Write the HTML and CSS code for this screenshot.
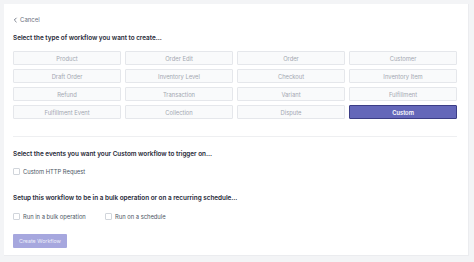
FILE: index.html
```html
<!DOCTYPE html>
<html>
<head>
<meta charset="utf-8">
<link rel="stylesheet" href="styles.css">
</head>
<body>
<div class="card">
  <div class="cancel"><svg class="chev" width="5" height="6" viewBox="0 0 5 6"><path d="M3.5 0.8 L1.3 3 L3.5 5.2" fill="none" stroke="#6b7280" stroke-width="0.9"/></svg>Cancel</div>
  <h2 class="heading first">Select the type of workflow you want to create...</h2>
  <div class="grid">
    <div class="opt">Product</div>
    <div class="opt">Order Edit</div>
    <div class="opt">Order</div>
    <div class="opt">Customer</div>
    <div class="opt">Draft Order</div>
    <div class="opt">Inventory Level</div>
    <div class="opt">Checkout</div>
    <div class="opt">Inventory Item</div>
    <div class="opt">Refund</div>
    <div class="opt">Transaction</div>
    <div class="opt">Variant</div>
    <div class="opt">Fulfillment</div>
    <div class="opt">Fulfillment Event</div>
    <div class="opt">Collection</div>
    <div class="opt">Dispute</div>
    <div class="opt active">Custom</div>
  </div>
  <div class="divider"></div>
  <h2 class="heading">Select the events you want your Custom workflow to trigger on...</h2>
  <div class="checks events">
    <label class="check"><span class="box"></span>Custom HTTP Request</label>
  </div>
  <h2 class="heading">Setup this workflow to be in a bulk operation or on a recurring schedule...</h2>
  <div class="checks schedule">
    <label class="check wide"><span class="box"></span>Run in a bulk operation</label>
    <label class="check"><span class="box"></span>Run on a schedule</label>
  </div>
  <button class="create">Create Workflow</button>
</div>
</body>
</html>
```
FILE: styles.css
```css
html, body {
  margin: 0;
  padding: 0;
}
body {
  background: #f3f4f6;
  font-family: Inter, "Noto Sans", sans-serif;
  width: 474px;
  height: 262px;
  padding: 4px 5px 6px 4px;
  box-sizing: border-box;
}
.card {
  background: #ffffff;
  height: 252px;
  box-sizing: border-box;
  padding: 12px 12px 0 9px;
  border-right: 1px solid #ebecef;
  border-bottom: 1px solid #ebecef;
}
.cancel {
  display: flex;
  align-items: center;
  gap: 2px;
  font-size: 6px;
  color: #6b7280;
  height: 8px;
  line-height: 8px;
}
.chev {
  display: block;
}
.heading {
  margin: 0;
  font-size: 6.4px;
  font-weight: 600;
  color: #1f2937;
  line-height: 9px;
  letter-spacing: -0.02px;
}
.heading.first {
  margin-top: 10px;
}
.grid {
  margin-top: 8px;
  display: grid;
  grid-template-columns: repeat(4, 108px);
  grid-auto-rows: 14px;
  column-gap: 4px;
  row-gap: 4px;
}
.opt {
  box-sizing: border-box;
  border: 1px solid #e5e7eb;
  background: #f9fafb;
  border-radius: 1px;
  font-size: 5.8px;
  color: #a3a8b1;
  display: flex;
  align-items: center;
  justify-content: center;
}
.opt.active {
  background: #6467b9;
  border-color: #3b3d86;
  color: #ffffff;
  font-weight: 600;
}
.divider {
  margin-top: 17px;
  height: 1px;
  background: #eeeff1;
  width: 444px;
  margin-bottom: 13px;
}
.checks {
  display: flex;
  height: 8px;
  align-items: center;
}
.checks.events {
  margin-top: 8px;
  margin-bottom: 19px;
}
.checks.schedule {
  margin-top: 9px;
  margin-bottom: 14px;
}
.check {
  display: flex;
  align-items: center;
  gap: 3px;
  font-size: 5.8px;
  color: #4b5563;
}
.check.wide {
  width: 92px;
}
.box {
  width: 5px;
  height: 5px;
  border: 1px solid #d1d5db;
  border-radius: 1px;
  background: #fff;
  display: block;
}
.create {
  display: block;
  border: none;
  background: #a6a7de;
  color: #eef0fb;
  font-family: Inter, "Noto Sans", sans-serif;
  font-size: 5.3px;
  width: 54px;
  height: 14px;
  border-radius: 1px;
  padding: 0;
}
```
